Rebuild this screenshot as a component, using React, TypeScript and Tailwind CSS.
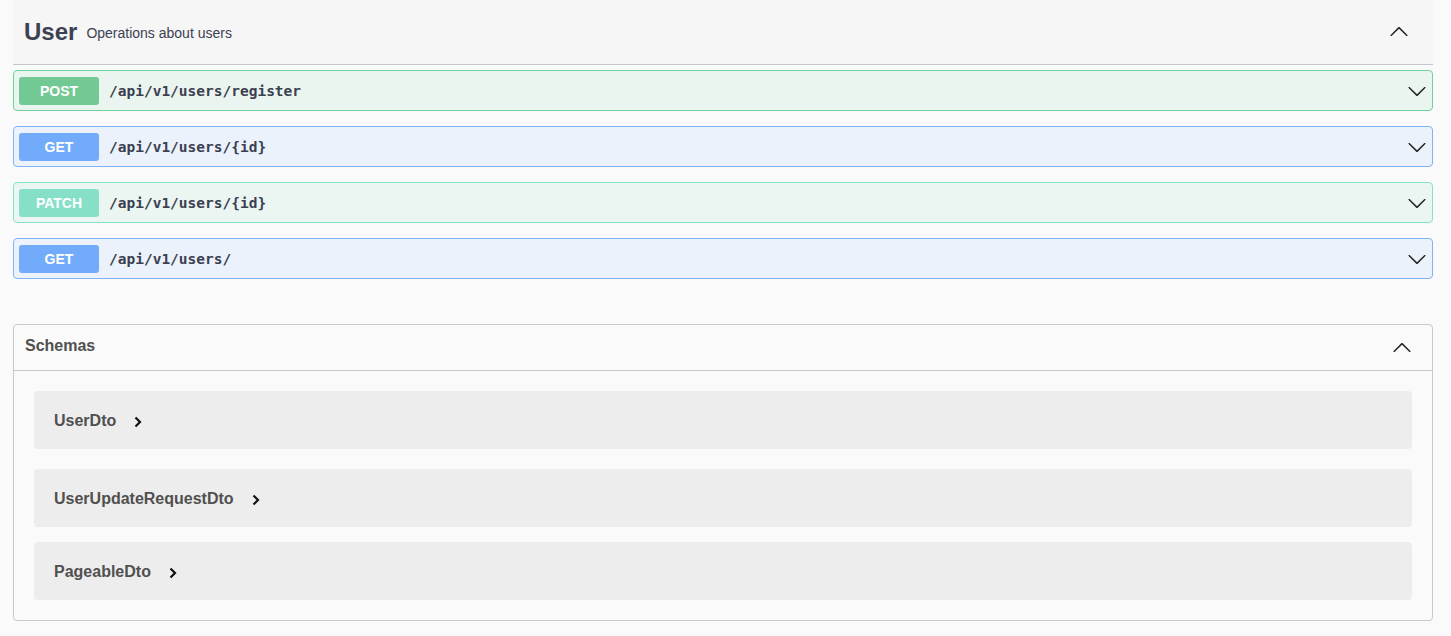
const Arrow = ({ className = "" }: { className?: string }) => (
  <svg viewBox="0 0 20 20" width="20" height="20" className={className}>
    <path
      fill="#222"
      d="M17.418 6.109c.272-.268.709-.268.979 0s.271.701 0 .969l-7.908 7.83c-.27.268-.707.268-.979 0l-7.908-7.83c-.27-.268-.27-.701 0-.969.271-.268.709-.268.979 0L10 13.25l7.418-7.141z"
    />
  </svg>
);

const Caret = () => (
  <svg viewBox="0 0 10 12" width="10" height="12" className="ml-[17px] mt-[3px]">
    <path d="M2.5 1.5l4.5 4.5-4.5 4.5" fill="none" stroke="#111" strokeWidth="2.2" />
  </svg>
);

const ops = [
  { method: "POST", path: "/api/v1/users/register", box: "border-[#6fd19c] bg-[#ebf5ef]", badge: "bg-[#73c994]" },
  { method: "GET", path: "/api/v1/users/{id}", box: "border-[#7eb3f9] bg-[#ebf2fb]", badge: "bg-[#71abf9]" },
  { method: "PATCH", path: "/api/v1/users/{id}", box: "border-[#84e3cd] bg-[#ebf5f2]", badge: "bg-[#86e0c8]" },
  { method: "GET", path: "/api/v1/users/", box: "border-[#7eb3f9] bg-[#ebf2fb]", badge: "bg-[#71abf9]" },
];

const models = [
  { name: "UserDto", gap: "mb-[20px]" },
  { name: "UserUpdateRequestDto", gap: "mb-[15px]" },
  { name: "PageableDto", gap: "" },
];

export default function App() {
  return (
    <div
      className="min-h-[636px] bg-[#fafafa] pl-[13px] pr-[18px] text-[#3b4151]"
      style={{ fontFamily: '"Liberation Sans", Arial, sans-serif' }}
    >
      {/* tag header */}
      <div className="flex h-[65px] items-center border-b border-[#c4c6ca] bg-[#f6f6f6] pl-[11px] pr-[24px]">
        <h3 className="text-[24px] font-bold leading-none text-[#3b4151]">User</h3>
        <span className="ml-[9px] mt-[2px] text-[14px] text-[#3b4151]">Operations about users</span>
        <Arrow className="ml-auto rotate-180" />
      </div>

      <div className="flex flex-col gap-[15px] pt-[5px]">
        {ops.map((op, i) => (
          <div
            key={i}
            className={`flex h-[41px] items-center rounded-[4px] border pl-[5px] pr-[5px] ${op.box}`}
          >
            <span
              className={`flex h-[28px] w-[80px] items-center justify-center rounded-[3px] pt-[1px] text-[14px] font-bold text-white ${op.badge}`}
            >
              {op.method}
            </span>
            <span
              className="ml-[10px] mt-[2px] text-[14.5px] font-bold text-[#3b4151]"
              style={{ fontFamily: '"DejaVu Sans Mono", monospace' }}
            >
              {op.path}
            </span>
            <Arrow className="ml-auto mt-[1px]" />
          </div>
        ))}
      </div>

      {/* schemas */}
      <section className="mt-[45px] rounded-[4px] border border-[#c8c8cc] bg-[#fafafa]">
        <div className="flex h-[46px] items-center border-b border-[#c8c8cc] pl-[11px] pr-[20px]">
          <h4 className="mb-[3px] text-[16px] font-bold text-[#505050]">Schemas</h4>
          <Arrow className="ml-auto rotate-180" />
        </div>
        <div className="px-[20px] py-[20px]">
          {models.map((m) => (
            <div
              key={m.name}
              className={`flex h-[58px] items-center rounded-[4px] bg-[#ededed] pl-[20px] ${m.gap}`}
            >
              <span className="mt-[1px] text-[16px] font-bold text-[#505050]">{m.name}</span>
              <Caret />
            </div>
          ))}
        </div>
      </section>
    </div>
  );
}
